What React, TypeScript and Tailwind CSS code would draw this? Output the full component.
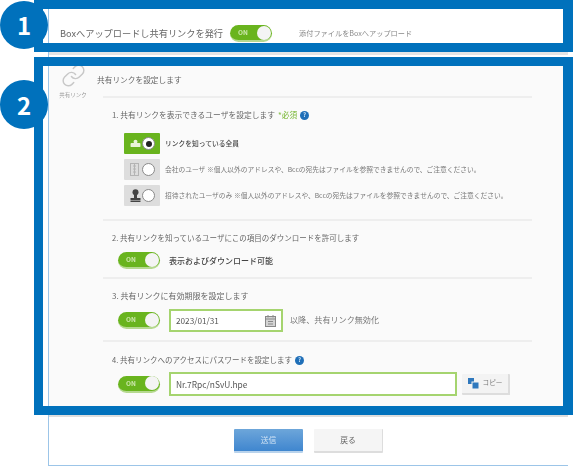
import React from "react";
import { Link as LinkIcon } from "lucide-react";

const FONT = "font-['Noto_Sans_CJK_JP','Noto_Sans',sans-serif]";

function Toggle({ className = "" }: { className?: string }) {
  return (
    <div
      className={`flex h-[17px] w-[42px] shrink-0 items-center justify-between rounded-full border-b-2 border-[#b5d98f] bg-[#69b41e] pl-[8px] pr-[1px] ${className}`}
    >
      <span className="text-[6.5px] font-bold leading-none text-[#cfe8b0]">ON</span>
      <span className="h-[14px] w-[14px] rounded-full bg-[#f4f4f4]" />
    </div>
  );
}

function Help() {
  return (
    <span className="ml-[3px] inline-flex h-[9px] w-[9px] shrink-0 items-center justify-center rounded-full bg-[#1f6fb8] text-[6px] font-bold leading-none text-[#cfe3f5]">
      ?
    </span>
  );
}

function Divider({ className = "" }: { className?: string }) {
  return <div className={`h-[2px] bg-[#eeeeee] ${className}`} />;
}

function Title({ children, className = "" }: { children: React.ReactNode; className?: string }) {
  return (
    <div className={`flex h-[16px] items-center whitespace-nowrap pl-[9px] text-[#666666] ${className}`}>
      {children}
    </div>
  );
}

function Radio({ on }: { on?: boolean }) {
  return (
    <span className="flex h-[13px] w-[13px] items-center justify-center rounded-full border border-[#8a8a8a] bg-white">
      {on ? <span className="h-[6px] w-[6px] rounded-full bg-[#222222]" /> : null}
    </span>
  );
}

function GroupIcon() {
  return (
    <svg width="11" height="9" viewBox="0 0 12 10" fill="#e8f4d8">
      <circle cx="6" cy="3" r="2.2" />
      <rect x="0.5" y="4.5" width="11" height="4.5" rx="1" />
    </svg>
  );
}

function BuildingIcon() {
  return (
    <svg width="9" height="13" viewBox="0 0 9 13" fill="none" stroke="#b4b4b4" strokeWidth="1">
      <rect x="0.5" y="0.5" width="8" height="12" />
      <path d="M3 3h3M3 6h3M3 9h3M4.5 1v11" />
    </svg>
  );
}

function PersonIcon() {
  return (
    <svg width="11" height="13" viewBox="0 0 11 13" fill="#444444">
      <circle cx="5.5" cy="3.2" r="3" />
      <path d="M4 6h3v3h3.5v2H.5V9H4z" />
      <rect x="0.5" y="11.5" width="10" height="1.5" />
    </svg>
  );
}

function Option({
  icon,
  on,
  children,
}: {
  icon: React.ReactNode;
  on?: boolean;
  children: React.ReactNode;
}) {
  return (
    <div className="flex h-[21px] items-center whitespace-nowrap pl-[21px]">
      <div
        className={`flex h-[21px] w-[36px] items-center justify-between rounded-[1px] pl-[6px] pr-[5px] ${
          on ? "bg-[#69b41e]" : "bg-[#dddddd]"
        }`}
      >
        {icon}
        <Radio on={on} />
      </div>
      <span className={`ml-[5px] text-[6.75px] ${on ? "font-medium text-[#444444]" : "text-[#777777]"}`}>
        {children}
      </span>
    </div>
  );
}

export default function App() {
  return (
    <div className={`relative h-[466px] w-[573px] overflow-hidden bg-white ${FONT}`}>
      <div className="h-full blur-[0.6px]">
        <div className="ml-[48px] mr-[5px] flex h-[466px] flex-col border-b border-l border-[#9cc5e8]">
          {/* Upload row */}
          <div className="flex h-[55px] shrink-0 items-center whitespace-nowrap border-b-[3px] border-[#e4e4e4] pl-[11px] pt-[15px]">
            <span className="text-[9.2px] text-[#666666]">Boxへアップロードし共有リンクを発行</span>
            <Toggle className="ml-[7px]" />
            <span className="ml-[27px] text-[7.2px] text-[#888888]">添付ファイルをBoxへアップロード</span>
          </div>

          {/* Share link settings */}
          <div className="mt-[2px] flex h-[360px] shrink-0 border-b-[2px] border-[#dddddd] bg-[#fafafa]">
            <div className="flex w-[48px] shrink-0 flex-col items-center pt-[6px]">
              <LinkIcon size={25} strokeWidth={1.4} color="#c8c8c8" />
              <span className="mt-[3px] text-[5.5px] text-[#999999]">共有リンク</span>
            </div>
            <div className="flex w-[435px] flex-col">
              <div className="mt-[15px] flex h-[16px] items-center whitespace-nowrap text-[7.7px] text-[#666666]">
                共有リンクを設定します
              </div>
              <Divider className="ml-[6px] mt-[8px]" />

              <Title className="ml-[6px] mt-[9px] text-[7.75px]">
                1. 共有リンクを表示できるユーザを設定します
                <span className="ml-[3px] font-medium text-[#8cc152]">*必須</span>
                <Help />
              </Title>
              <div className="ml-[6px] mt-[10px] flex flex-col gap-[5px]">
                <Option on icon={<GroupIcon />}>リンクを知っている全員</Option>
                <Option icon={<BuildingIcon />}>
                  会社のユーザ ※個人以外のアドレスや、Bccの宛先はファイルを参照できませんので、ご注意ください。
                </Option>
                <Option icon={<PersonIcon />}>
                  招待されたユーザのみ ※個人以外のアドレスや、Bccの宛先はファイルを参照できませんので、ご注意ください。
                </Option>
              </div>
              <Divider className="ml-[6px] mt-[13px]" />

              <Title className="ml-[6px] mt-[9px] text-[7.5px]">
                2. 共有リンクを知っているユーザにこの項目のダウンロードを許可します
              </Title>
              <div className="ml-[21px] mt-[6px] flex items-center whitespace-nowrap">
                <Toggle />
                <span className="ml-[9px] text-[8px] font-medium text-[#444444]">表示およびダウンロード可能</span>
              </div>
              <Divider className="ml-[6px] mt-[8px]" />

              <Title className="ml-[6px] mt-[9px] text-[8px]">3. 共有リンクに有効期限を設定します</Title>
              <div className="ml-[21px] mt-[5px] flex h-[23px] items-center whitespace-nowrap">
                <Toggle />
                <div className="ml-[9px] flex h-[23px] w-[114px] items-center justify-between border-2 border-[#a5d46f] bg-white pl-[5px] pr-[5px]">
                  <span className="text-[8.2px] text-[#555555]">2023/01/31</span>
                  <svg width="11" height="12" viewBox="0 0 11 12" fill="none" stroke="#888888">
                    <rect x="0.5" y="1.5" width="10" height="10" fill="#d4d4d4" />
                    <path d="M0.5 4h10M3 0v2.5M8 0v2.5M3 6.5h5M3 9h5" />
                  </svg>
                </div>
                <span className="ml-[7px] text-[8.1px] text-[#777777]">以降、共有リンク無効化</span>
              </div>
              <Divider className="ml-[6px] mt-[8px]" />

              <Title className="ml-[6px] mt-[10px] text-[7.5px]">
                4. 共有リンクへのアクセスにパスワードを設定します
                <Help />
              </Title>
              <div className="ml-[21px] mt-[4px] flex h-[24px] items-center whitespace-nowrap">
                <Toggle />
                <div className="ml-[9px] flex h-[24px] w-[288px] items-center border-2 border-[#a5d46f] bg-white pl-[5px]">
                  <span className="text-[8.4px] text-[#555555]">Nr.7Rpc/nSvU.hpe</span>
                </div>
                <div className="ml-[5px] flex h-[21px] w-[48px] items-center justify-center gap-[4px] rounded-[1px] border-b-2 border-r-2 border-[#dddddd] bg-[#f3f3f3]">
                  <svg width="11" height="11" viewBox="0 0 11 11">
                    <rect x="0" y="0" width="6" height="6" fill="#2f78bd" />
                    <rect x="4" y="4" width="7" height="7" fill="#2f78bd" stroke="#f3f3f3" />
                  </svg>
                  <span className="text-[6.6px] text-[#777777]">コピー</span>
                </div>
              </div>
            </div>
          </div>

          {/* Footer buttons */}
          <div className="mt-[12px] flex justify-center gap-[11px]">
            <button className="h-[24px] w-[69px] rounded-[1px] border-b-2 border-[#b9d3ec] bg-linear-to-b from-[#6da6da] to-[#3f86cf] text-[7.8px] text-[#cfe2f4]">
              送信
            </button>
            <button className="h-[24px] w-[69px] rounded-[1px] border-b-2 border-r border-[#dddddd] bg-[#f5f5f5] text-[7.8px] text-[#666666]">
              戻る
            </button>
          </div>
        </div>
      </div>

      {/* Callout frames and numbered badges sit on top of the page */}
      <div className="absolute left-[34px] top-0 h-[52px] w-[539px] border-y-[9px] border-l-[9px] border-r-[10px] border-[#0071bc]" />
      <div className="absolute left-[34px] top-[57px] h-[358px] w-[539px] border-y-[9px] border-l-[9px] border-r-[10px] border-[#0071bc]" />
      <div className="absolute left-0 top-[1px] flex h-[48px] w-[48px] items-center justify-center rounded-full bg-[#0071bc] text-[24px] font-bold text-white">
        1
      </div>
      <div className="absolute left-0 top-[80px] flex h-[49px] w-[48px] items-center justify-center rounded-full bg-[#0071bc] text-[24px] font-bold text-white">
        2
      </div>
    </div>
  );
}
